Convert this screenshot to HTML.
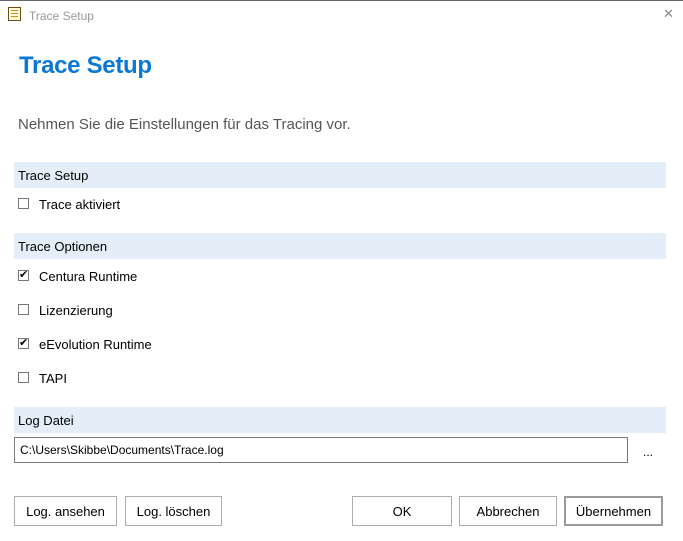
<html><head><style>
body{margin:0;width:683px;height:541px;background:#fff;font-family:"Liberation Sans",sans-serif;position:relative;overflow:hidden;color:#000}
.a{position:absolute}
.bar{position:absolute;left:14px;width:652px;height:26px;background:#e3eef9;font-size:13px;line-height:27px;padding-left:4px;box-sizing:border-box}
.cb{position:absolute;left:18px;width:11px;height:11px;border:1px solid #777;box-sizing:border-box;background:#fff;font-size:11px;line-height:9px;text-align:center}
.lb{position:absolute;left:39px;font-size:13px}
.btn{position:absolute;top:496px;height:30px;border:1px solid #adadad;box-sizing:border-box;background:#fff;font-size:13px;line-height:29px;text-align:center}
</style></head><body>
<div class="a" style="left:0;top:0;width:683px;height:1px;background:#666"></div>
<div class="a" style="left:8px;top:7px;width:13px;height:14px;border:1px solid #6b4c10;box-sizing:border-box;background:#fff8dc"><div style="margin:2px 0 0 2px;width:7px;height:1px;background:#c8901a;box-shadow:0 3px #c8901a,0 6px #c8901a"></div></div>
<div class="a" style="left:29px;top:9px;font-size:12px;color:#999">Trace Setup</div>
<div class="a" style="left:663px;top:6px;font-size:13px;color:#888">✕</div>
<div class="a" style="left:19px;top:52px;font-size:24px;color:#0a78d7;font-weight:bold;letter-spacing:-0.3px">Trace Setup</div>
<div class="a" style="left:18px;top:116px;font-size:15px;color:#555">Nehmen Sie die Einstellungen für das Tracing vor.</div>
<div class="bar" style="top:162px">Trace Setup</div>
<div class="cb" style="top:198px"></div><div class="lb" style="top:197px">Trace aktiviert</div>
<div class="bar" style="top:233px">Trace Optionen</div>
<div class="cb" style="top:270px">✔</div><div class="lb" style="top:269px">Centura Runtime</div>
<div class="cb" style="top:304px"></div><div class="lb" style="top:303px">Lizenzierung</div>
<div class="cb" style="top:338px">✔</div><div class="lb" style="top:337px">eEvolution Runtime</div>
<div class="cb" style="top:372px"></div><div class="lb" style="top:371px">TAPI</div>
<div class="bar" style="top:407px">Log Datei</div>
<div class="a" style="left:14px;top:437px;width:614px;height:26px;border:1px solid #7a7a7a;box-sizing:border-box;font-size:12px;line-height:25px;padding-left:5px">C:\Users\Skibbe\Documents\Trace.log</div>
<div class="a" style="left:643px;top:445px;font-size:12px">...</div>
<div class="btn" style="left:14px;width:103px">Log. ansehen</div>
<div class="btn" style="left:125px;width:97px">Log. löschen</div>
<div class="btn" style="left:352px;width:100px">OK</div>
<div class="btn" style="left:459px;width:98px">Abbrechen</div>
<div class="btn" style="left:564px;width:99px;border:2px solid #9a9a9a;line-height:27px">Übernehmen</div>
</body></html>
